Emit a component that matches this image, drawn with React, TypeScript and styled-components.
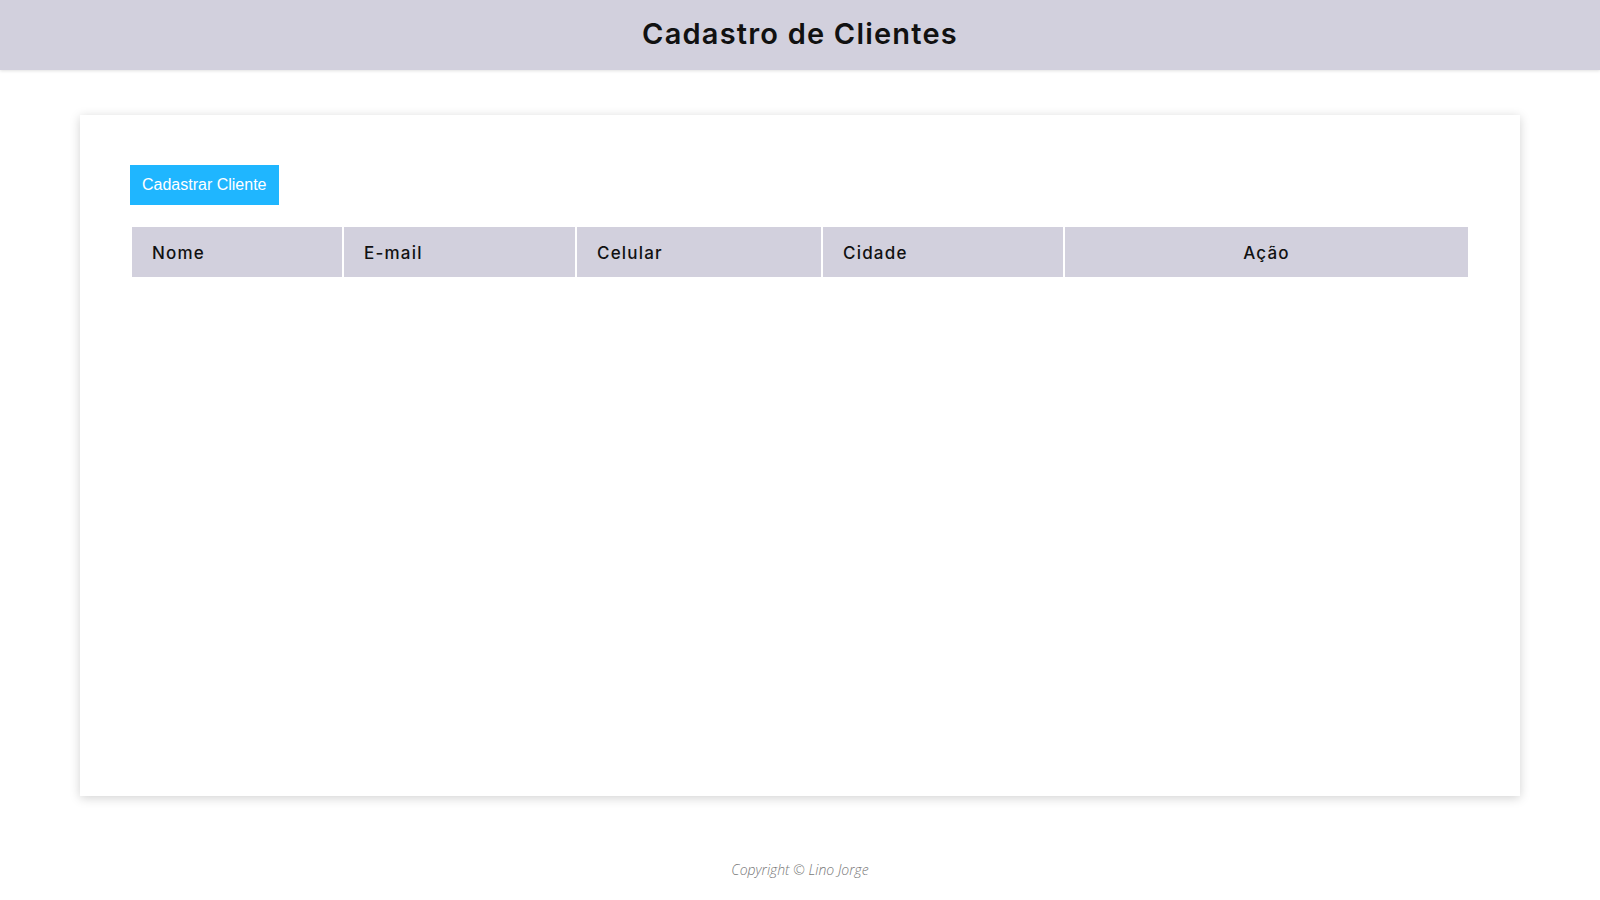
import React from 'react';
import styled, { createGlobalStyle } from 'styled-components';

const GlobalStyle = createGlobalStyle`
  * {
    box-sizing: border-box;
  }

  body {
    margin: 0;
    background: #ffffff;
    font-family: 'Inter', 'Noto Sans', sans-serif;
  }
`;

const Header = styled.header`
  height: 70px;
  padding-bottom: 3px;
  background: #d2d0dd;
  display: flex;
  align-items: center;
  justify-content: center;
  box-shadow: 0 1px 3px rgba(0, 0, 0, 0.12);

  h1 {
    margin: 0;
    font-family: 'Inter', sans-serif;
    font-size: 29px;
    font-weight: 600;
    letter-spacing: 1.2px;
    color: #111;
  }
`;

const Main = styled.main`
  padding: 45px 80px 0;
`;

const Card = styled.section`
  background: #fff;
  height: 681px;
  padding: 50px;
  box-shadow: 0 2px 10px rgba(0, 0, 0, 0.18);
`;

const AddButton = styled.button`
  height: 40px;
  padding: 0 12px;
  border: none;
  background: #1fb6ff;
  color: #fff;
  font-family: 'Liberation Sans', Arial, sans-serif;
  font-size: 16px;
  cursor: pointer;
`;

const Table = styled.table`
  width: 100%;
  margin-top: 20px;
  border-spacing: 2px;
`;

const Th = styled.th<{ $w: number; $center?: boolean }>`
  width: ${(p) => p.$w}px;
  height: 50px;
  padding: 2px 20px 0;
  background: #d2d0dd;
  text-align: ${(p) => (p.$center ? 'center' : 'left')};
  font-family: 'Inter', sans-serif;
  font-size: 17px;
  font-weight: 500;
  letter-spacing: 1.2px;
  color: #111;
`;

const Footer = styled.footer`
  margin-top: 64px;
  text-align: center;
  font-family: 'Open Sans', sans-serif;
  font-style: italic;
  font-weight: 300;
  font-size: 14px;
  color: #777;
`;

const columns = [
  { label: 'Nome', w: 210 },
  { label: 'E-mail', w: 231 },
  { label: 'Celular', w: 244 },
  { label: 'Cidade', w: 240 },
  { label: 'Ação', w: 403, center: true },
];

const App: React.FC = () => {
  return (
    <>
      <GlobalStyle />
      <Header>
        <h1>Cadastro de Clientes</h1>
      </Header>
      <Main>
        <Card>
          <AddButton>Cadastrar Cliente</AddButton>
          <Table>
            <thead>
              <tr>
                {columns.map((c) => (
                  <Th key={c.label} $w={c.w} $center={c.center}>
                    {c.label}
                  </Th>
                ))}
              </tr>
            </thead>
            <tbody />
          </Table>
        </Card>
      </Main>
      <Footer>Copyright © Lino Jorge</Footer>
    </>
  );
};

export default App;
